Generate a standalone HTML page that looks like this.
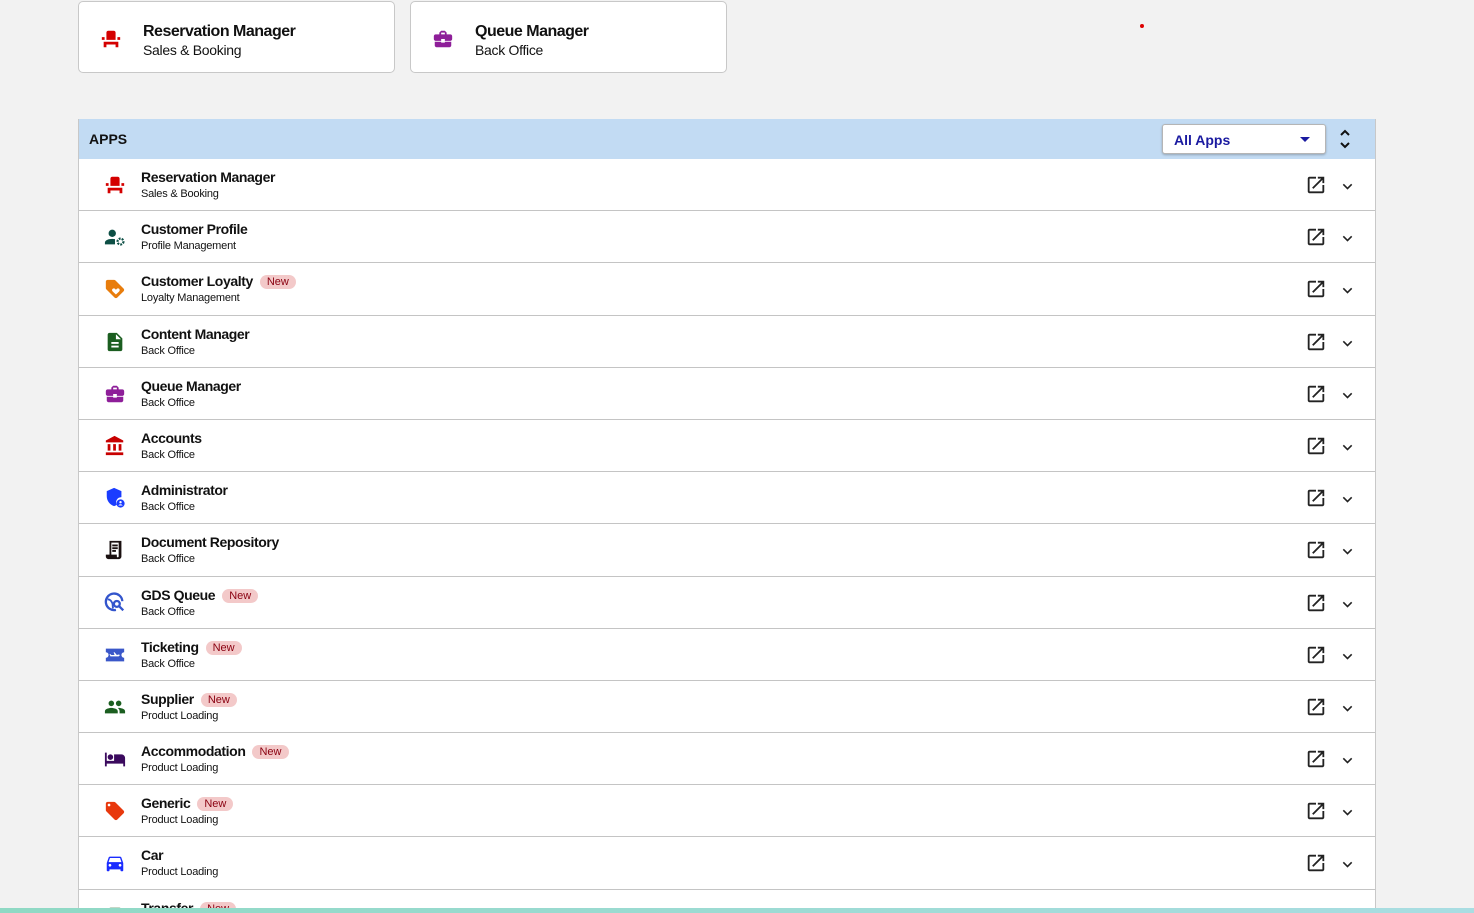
<!DOCTYPE html>
<html><head><meta charset="utf-8"><style>
*{box-sizing:border-box;margin:0;padding:0}
html,body{width:1474px;height:913px;overflow:hidden}
body{background:#f2f2f2;font-family:"Liberation Sans",Arial,sans-serif;color:#111;position:relative}
.card{position:absolute;top:1px;width:317px;height:72px;background:#fff;border:1px solid #c8c8c8;border-radius:5px}
.card svg{position:absolute;left:21px;top:26px;width:22px;height:22px}
.card .t{position:absolute;left:64px;top:21px;font-size:16px;font-weight:bold;letter-spacing:-0.5px;color:#111}
.card .s{position:absolute;left:64px;top:40px;font-size:14px;letter-spacing:-0.3px;color:#111}
.panel{position:absolute;left:78px;top:119px;width:1298px;height:794px;overflow:hidden;background:#fff;border:1px solid #c8c8c8;border-top:none}
.hdr{height:40px;background:#c2dbf3;position:relative;margin:0 -1px}
.hdr .a{position:absolute;left:11px;top:12px;font-size:14px;font-weight:bold}
.sel{position:absolute;left:1084px;top:5px;width:164px;height:30px;background:#fff;border:1px solid #b5b5b5;border-radius:3px;box-shadow:0 1px 2px rgba(0,0,0,.25)}
.sel span{position:absolute;left:11px;top:7px;font-size:14px;color:#1a1aa0;font-weight:bold}
.sel i{position:absolute;left:137px;top:12px;border-left:5px solid transparent;border-right:5px solid transparent;border-top:5px solid #1a1aa0}
.row{height:52.2px;border-bottom:1.5px solid #c4c4c4;position:relative}
.row .ic{position:absolute;left:25px;top:15px;width:22px;height:22px}
.row .t{position:absolute;left:62px;top:10px;font-size:14px;font-weight:bold;letter-spacing:-0.4px;white-space:nowrap}
.row .s{position:absolute;left:62px;top:29px;font-size:11px;letter-spacing:-0.2px;white-space:nowrap}
.new{display:inline-block;margin-left:7px;background:#f3c9c9;color:#8a0010;font-size:11px;font-weight:normal;letter-spacing:0;border-radius:8px;padding:1px 7px;vertical-align:1px}
.op{position:absolute;left:1226px;top:15px;width:22px;height:22px}
.ex{position:absolute;left:1259px;top:18px;width:19px;height:19px}
.bot{position:absolute;left:0;top:908px;width:1474px;height:5px;background:linear-gradient(90deg,#8fd9c4,#a9dde2);z-index:5}
</style></head><body>
<div class="card" style="left:78px"><svg viewBox="0 0 24 24" fill="#d40000"><path d="M4 18v3h3v-3h10v3h3v-6H4zm15-8h3v3h-3zM2 10h3v3H2zm15 3H7V5c0-1.1.9-2 2-2h6c1.1 0 2 .9 2 2v8z"/></svg><div class="t">Reservation Manager</div><div class="s">Sales &amp; Booking</div></div>
<div class="card" style="left:410px"><svg viewBox="0 0 24 24" fill="#8e1e99"><path d="M10 16v-1H3.01L3 19c0 1.11.89 2 2 2h14c1.11 0 2-.89 2-2v-4h-7v1h-4zm10-9h-4.01V5l-2-2h-4l-2 2v2H4c-1.1 0-2 .9-2 2v3c0 1.11.89 2 2 2h6v-2h4v2h6c1.1 0 2-.9 2-2V9c0-1.1-.9-2-2-2zm-6 0h-4V5h4v2z"/></svg><div class="t">Queue Manager</div><div class="s">Back Office</div></div>
<div style="position:absolute;left:1140px;top:24px;width:4px;height:4px;border-radius:2px;background:#d00"></div>
<div class="panel">
<div class="hdr"><div class="a">APPS</div><div class="sel"><span>All Apps</span><i></i></div>
<svg style="position:absolute;left:1259px;top:9px" width="16" height="22" viewBox="0 0 16 22" fill="none" stroke="#111" stroke-width="2"><path d="M4 7l4-4 4 4M4 15l4 4 4-4"/></svg></div>

<div class="row"><svg class="ic" viewBox="0 0 24 24" fill="#d40000"><path d="M4 18v3h3v-3h10v3h3v-6H4zm15-8h3v3h-3zM2 10h3v3H2zm15 3H7V5c0-1.1.9-2 2-2h6c1.1 0 2 .9 2 2v8z"/></svg><div class="t">Reservation Manager</div><div class="s">Sales &amp; Booking</div>
<svg class="op" viewBox="0 0 24 24" fill="#222"><path d="M19 19H5V5h7V3H5c-1.11 0-2 .9-2 2v14c0 1.1.89 2 2 2h14c1.1 0 2-.9 2-2v-7h-2v7zM14 3v2h3.59l-9.83 9.83 1.41 1.41L19 6.41V10h2V3h-7z"/></svg><svg class="ex" viewBox="0 0 24 24" fill="#222"><path d="M16.59 8.59L12 13.17 7.41 8.59 6 10l6 6 6-6z"/></svg></div>

<div class="row"><svg class="ic" viewBox="0 0 24 24" fill="#0d4f45"><circle cx="9" cy="8" r="4"/><path d="M1 20v-2c0-2.5 4-4 8-4 1 0 2 .1 3 .3V20z"/><circle cx="18" cy="17" r="3.2" fill="none" stroke="#0d4f45" stroke-width="2.4" stroke-dasharray="2 1.2"/></svg><div class="t">Customer Profile</div><div class="s">Profile Management</div>
<svg class="op" viewBox="0 0 24 24" fill="#222"><path d="M19 19H5V5h7V3H5c-1.11 0-2 .9-2 2v14c0 1.1.89 2 2 2h14c1.1 0 2-.9 2-2v-7h-2v7zM14 3v2h3.59l-9.83 9.83 1.41 1.41L19 6.41V10h2V3h-7z"/></svg><svg class="ex" viewBox="0 0 24 24" fill="#222"><path d="M16.59 8.59L12 13.17 7.41 8.59 6 10l6 6 6-6z"/></svg></div>

<div class="row"><svg class="ic" viewBox="0 0 24 24" fill="#e87d0d"><path d="M21.41 11.58l-9-9C12.05 2.22 11.55 2 11 2H4c-1.1 0-2 .9-2 2v7c0 .55.22 1.05.59 1.42l9 9c.36.36.86.58 1.41.58s1.05-.22 1.41-.59l7-7c.37-.36.59-.86.59-1.41s-.23-1.06-.59-1.420z"/><path fill="#fff" d="M13 18l-3.5-3.3c-1-1-1-2.3 0-3s2-.4 2.7.3l.8.8.8-.8c.7-.7 2-1 2.7-.3s1 2 0 3z"/></svg><div class="t">Customer Loyalty<span class="new">New</span></div><div class="s">Loyalty Management</div>
<svg class="op" viewBox="0 0 24 24" fill="#222"><path d="M19 19H5V5h7V3H5c-1.11 0-2 .9-2 2v14c0 1.1.89 2 2 2h14c1.1 0 2-.9 2-2v-7h-2v7zM14 3v2h3.59l-9.83 9.83 1.41 1.41L19 6.41V10h2V3h-7z"/></svg><svg class="ex" viewBox="0 0 24 24" fill="#222"><path d="M16.59 8.59L12 13.17 7.41 8.59 6 10l6 6 6-6z"/></svg></div>

<div class="row"><svg class="ic" viewBox="0 0 24 24" fill="#1b5e20"><path d="M14 2H6c-1.1 0-2 .9-2 2v16c0 1.1.9 2 2 2h12c1.1 0 2-.9 2-2V8l-6-6zm2 16H8v-2h8v2zm0-4H8v-2h8v2zm-3-5V3.5L18.5 9H13z"/></svg><div class="t">Content Manager</div><div class="s">Back Office</div>
<svg class="op" viewBox="0 0 24 24" fill="#222"><path d="M19 19H5V5h7V3H5c-1.11 0-2 .9-2 2v14c0 1.1.89 2 2 2h14c1.1 0 2-.9 2-2v-7h-2v7zM14 3v2h3.59l-9.83 9.83 1.41 1.41L19 6.41V10h2V3h-7z"/></svg><svg class="ex" viewBox="0 0 24 24" fill="#222"><path d="M16.59 8.59L12 13.17 7.41 8.59 6 10l6 6 6-6z"/></svg></div>

<div class="row"><svg class="ic" viewBox="0 0 24 24" fill="#8e1e99"><path d="M10 16v-1H3.01L3 19c0 1.11.89 2 2 2h14c1.11 0 2-.89 2-2v-4h-7v1h-4zm10-9h-4.01V5l-2-2h-4l-2 2v2H4c-1.1 0-2 .9-2 2v3c0 1.11.89 2 2 2h6v-2h4v2h6c1.1 0 2-.9 2-2V9c0-1.1-.9-2-2-2zm-6 0h-4V5h4v2z"/></svg><div class="t">Queue Manager</div><div class="s">Back Office</div>
<svg class="op" viewBox="0 0 24 24" fill="#222"><path d="M19 19H5V5h7V3H5c-1.11 0-2 .9-2 2v14c0 1.1.89 2 2 2h14c1.1 0 2-.9 2-2v-7h-2v7zM14 3v2h3.59l-9.83 9.83 1.41 1.41L19 6.41V10h2V3h-7z"/></svg><svg class="ex" viewBox="0 0 24 24" fill="#222"><path d="M16.59 8.59L12 13.17 7.41 8.59 6 10l6 6 6-6z"/></svg></div>

<div class="row"><svg class="ic" viewBox="0 0 24 24" fill="#c80000"><path d="M4 10v7h3v-7H4zm6 0v7h3v-7h-3zM2 22h19v-3H2v3zm14-12v7h3v-7h-3zm-4.5-9L2 6v2h19V6l-9.5-5z"/></svg><div class="t">Accounts</div><div class="s">Back Office</div>
<svg class="op" viewBox="0 0 24 24" fill="#222"><path d="M19 19H5V5h7V3H5c-1.11 0-2 .9-2 2v14c0 1.1.89 2 2 2h14c1.1 0 2-.9 2-2v-7h-2v7zM14 3v2h3.59l-9.83 9.83 1.41 1.41L19 6.41V10h2V3h-7z"/></svg><svg class="ex" viewBox="0 0 24 24" fill="#222"><path d="M16.59 8.59L12 13.17 7.41 8.59 6 10l6 6 6-6z"/></svg></div>

<div class="row"><svg class="ic" viewBox="0 0 24 24" fill="#1a3cff"><path d="M11 1L3 4.5v5.5c0 5 3.4 9.6 8 10.8 1-.3 1.9-.7 2.7-1.3A6 6 0 0 1 19 11V4.5z"/><circle cx="18" cy="18" r="4.5"/><circle cx="18" cy="16.6" r="1.3" fill="#fff"/><path fill="#fff" d="M15.6 20.2c.6-1 1.5-1.4 2.4-1.4s1.8.4 2.4 1.4z"/></svg><div class="t">Administrator</div><div class="s">Back Office</div>
<svg class="op" viewBox="0 0 24 24" fill="#222"><path d="M19 19H5V5h7V3H5c-1.11 0-2 .9-2 2v14c0 1.1.89 2 2 2h14c1.1 0 2-.9 2-2v-7h-2v7zM14 3v2h3.59l-9.83 9.83 1.41 1.41L19 6.41V10h2V3h-7z"/></svg><svg class="ex" viewBox="0 0 24 24" fill="#222"><path d="M16.59 8.59L12 13.17 7.41 8.59 6 10l6 6 6-6z"/></svg></div>

<div class="row"><svg class="ic" viewBox="0 0 24 24" fill="#1a1010"><path d="M6 2h13v17c0 1.7-1.3 3-3 3H5c-1.7 0-3-1.3-3-3v-2h4zm2 2v13h6v2c0 .6.4 1 1 1s1-.4 1-1V4zm1 2h6v2H9zm0 3h6v2H9zm0 3h4v2H9z"/></svg><div class="t">Document Repository</div><div class="s">Back Office</div>
<svg class="op" viewBox="0 0 24 24" fill="#222"><path d="M19 19H5V5h7V3H5c-1.11 0-2 .9-2 2v14c0 1.1.89 2 2 2h14c1.1 0 2-.9 2-2v-7h-2v7zM14 3v2h3.59l-9.83 9.83 1.41 1.41L19 6.41V10h2V3h-7z"/></svg><svg class="ex" viewBox="0 0 24 24" fill="#222"><path d="M16.59 8.59L12 13.17 7.41 8.59 6 10l6 6 6-6z"/></svg></div>

<div class="row"><svg class="ic" viewBox="0 0 24 24" fill="none" stroke="#3355cc" stroke-width="2.5"><path d="M20 10a9 9 0 1 0-7 9.5"/><circle cx="14" cy="13" r="3.2"/><path d="M16.5 15.5l4.5 4.5"/><path d="M4 8c3 0 4 2 5 4s0 4 1 6" stroke-width="2"/></svg><div class="t">GDS Queue<span class="new">New</span></div><div class="s">Back Office</div>
<svg class="op" viewBox="0 0 24 24" fill="#222"><path d="M19 19H5V5h7V3H5c-1.11 0-2 .9-2 2v14c0 1.1.89 2 2 2h14c1.1 0 2-.9 2-2v-7h-2v7zM14 3v2h3.59l-9.83 9.83 1.41 1.41L19 6.41V10h2V3h-7z"/></svg><svg class="ex" viewBox="0 0 24 24" fill="#222"><path d="M16.59 8.59L12 13.17 7.41 8.59 6 10l6 6 6-6z"/></svg></div>

<div class="row"><svg class="ic" viewBox="0 0 24 24" fill="#3a57c9"><path d="M2 5h20v4a3 3 0 0 0 0 6v4H2v-4a3 3 0 0 0 0-6z"/><path fill="#fff" d="M7 13.5h9l1.5-1.5-1.5-.5-2 .5-2.5-3h-1l1 3H8l-1-1H6z"/></svg><div class="t">Ticketing<span class="new">New</span></div><div class="s">Back Office</div>
<svg class="op" viewBox="0 0 24 24" fill="#222"><path d="M19 19H5V5h7V3H5c-1.11 0-2 .9-2 2v14c0 1.1.89 2 2 2h14c1.1 0 2-.9 2-2v-7h-2v7zM14 3v2h3.59l-9.83 9.83 1.41 1.41L19 6.41V10h2V3h-7z"/></svg><svg class="ex" viewBox="0 0 24 24" fill="#222"><path d="M16.59 8.59L12 13.17 7.41 8.59 6 10l6 6 6-6z"/></svg></div>

<div class="row"><svg class="ic" viewBox="0 0 24 24" fill="#1b5e20"><path d="M16 11c1.66 0 2.99-1.34 2.99-3S17.66 5 16 5c-1.66 0-3 1.34-3 3s1.34 3 3 3zm-8 0c1.66 0 2.99-1.34 2.99-3S9.66 5 8 5C6.34 5 5 6.34 5 8s1.34 3 3 3zm0 2c-2.33 0-7 1.17-7 3.5V19h14v-2.5c0-2.33-4.67-3.5-7-3.5zm8 0c-.29 0-.62.02-.97.05 1.16.84 1.97 1.97 1.97 3.45V19h6v-2.5c0-2.33-4.67-3.5-7-3.5z"/></svg><div class="t">Supplier<span class="new">New</span></div><div class="s">Product Loading</div>
<svg class="op" viewBox="0 0 24 24" fill="#222"><path d="M19 19H5V5h7V3H5c-1.11 0-2 .9-2 2v14c0 1.1.89 2 2 2h14c1.1 0 2-.9 2-2v-7h-2v7zM14 3v2h3.59l-9.83 9.83 1.41 1.41L19 6.41V10h2V3h-7z"/></svg><svg class="ex" viewBox="0 0 24 24" fill="#222"><path d="M16.59 8.59L12 13.17 7.41 8.59 6 10l6 6 6-6z"/></svg></div>

<div class="row"><svg class="ic" viewBox="0 0 24 24" fill="#3b0a5e"><path d="M7 13c1.66 0 3-1.34 3-3S8.66 7 7 7s-3 1.34-3 3 1.34 3 3 3zm12-6h-8v7H3V5H1v15h2v-3h18v3h2v-9c0-2.21-1.79-4-4-4z"/></svg><div class="t">Accommodation<span class="new">New</span></div><div class="s">Product Loading</div>
<svg class="op" viewBox="0 0 24 24" fill="#222"><path d="M19 19H5V5h7V3H5c-1.11 0-2 .9-2 2v14c0 1.1.89 2 2 2h14c1.1 0 2-.9 2-2v-7h-2v7zM14 3v2h3.59l-9.83 9.83 1.41 1.41L19 6.41V10h2V3h-7z"/></svg><svg class="ex" viewBox="0 0 24 24" fill="#222"><path d="M16.59 8.59L12 13.17 7.41 8.59 6 10l6 6 6-6z"/></svg></div>

<div class="row"><svg class="ic" viewBox="0 0 24 24" fill="#e8380d"><path d="M21.41 11.58l-9-9C12.05 2.22 11.55 2 11 2H4c-1.1 0-2 .9-2 2v7c0 .55.22 1.05.59 1.42l9 9c.36.36.86.58 1.41.58.55 0 1.05-.22 1.41-.59l7-7c.37-.36.59-.86.59-1.41 0-.55-.23-1.06-.59-1.42zM5.5 7C4.67 7 4 6.33 4 5.5S4.67 4 5.5 4 7 4.67 7 5.5 6.33 7 5.5 7z"/></svg><div class="t">Generic<span class="new">New</span></div><div class="s">Product Loading</div>
<svg class="op" viewBox="0 0 24 24" fill="#222"><path d="M19 19H5V5h7V3H5c-1.11 0-2 .9-2 2v14c0 1.1.89 2 2 2h14c1.1 0 2-.9 2-2v-7h-2v7zM14 3v2h3.59l-9.83 9.83 1.41 1.41L19 6.41V10h2V3h-7z"/></svg><svg class="ex" viewBox="0 0 24 24" fill="#222"><path d="M16.59 8.59L12 13.17 7.41 8.59 6 10l6 6 6-6z"/></svg></div>

<div class="row"><svg class="ic" viewBox="0 0 24 24" fill="#1a2cff"><path d="M18.92 6.01C18.72 5.42 18.16 5 17.5 5h-11c-.66 0-1.21.42-1.42 1.01L3 12v8c0 .55.45 1 1 1h1c.55 0 1-.45 1-1v-1h12v1c0 .55.45 1 1 1h1c.55 0 1-.45 1-1v-8l-2.08-5.99zM6.5 16c-.83 0-1.5-.67-1.5-1.5S5.67 13 6.5 13s1.5.67 1.5 1.5S7.33 16 6.5 16zm11 0c-.83 0-1.5-.67-1.5-1.5s.67-1.5 1.5-1.5 1.5.67 1.5 1.5-.67 1.5-1.5 1.5zM5 11l1.5-4.5h11L19 11H5z"/></svg><div class="t">Car</div><div class="s">Product Loading</div>
<svg class="op" viewBox="0 0 24 24" fill="#222"><path d="M19 19H5V5h7V3H5c-1.11 0-2 .9-2 2v14c0 1.1.89 2 2 2h14c1.1 0 2-.9 2-2v-7h-2v7zM14 3v2h3.59l-9.83 9.83 1.41 1.41L19 6.41V10h2V3h-7z"/></svg><svg class="ex" viewBox="0 0 24 24" fill="#222"><path d="M16.59 8.59L12 13.17 7.41 8.59 6 10l6 6 6-6z"/></svg></div>

<div class="row"><svg class="ic" viewBox="0 0 24 24" fill="#1b5e20"><rect x="4" y="3" width="16" height="16" rx="3"/></svg><div class="t">Transfer<span class="new">New</span></div><div class="s">Product Loading</div></div>
</div>
<div class="bot"></div>
</body></html>
